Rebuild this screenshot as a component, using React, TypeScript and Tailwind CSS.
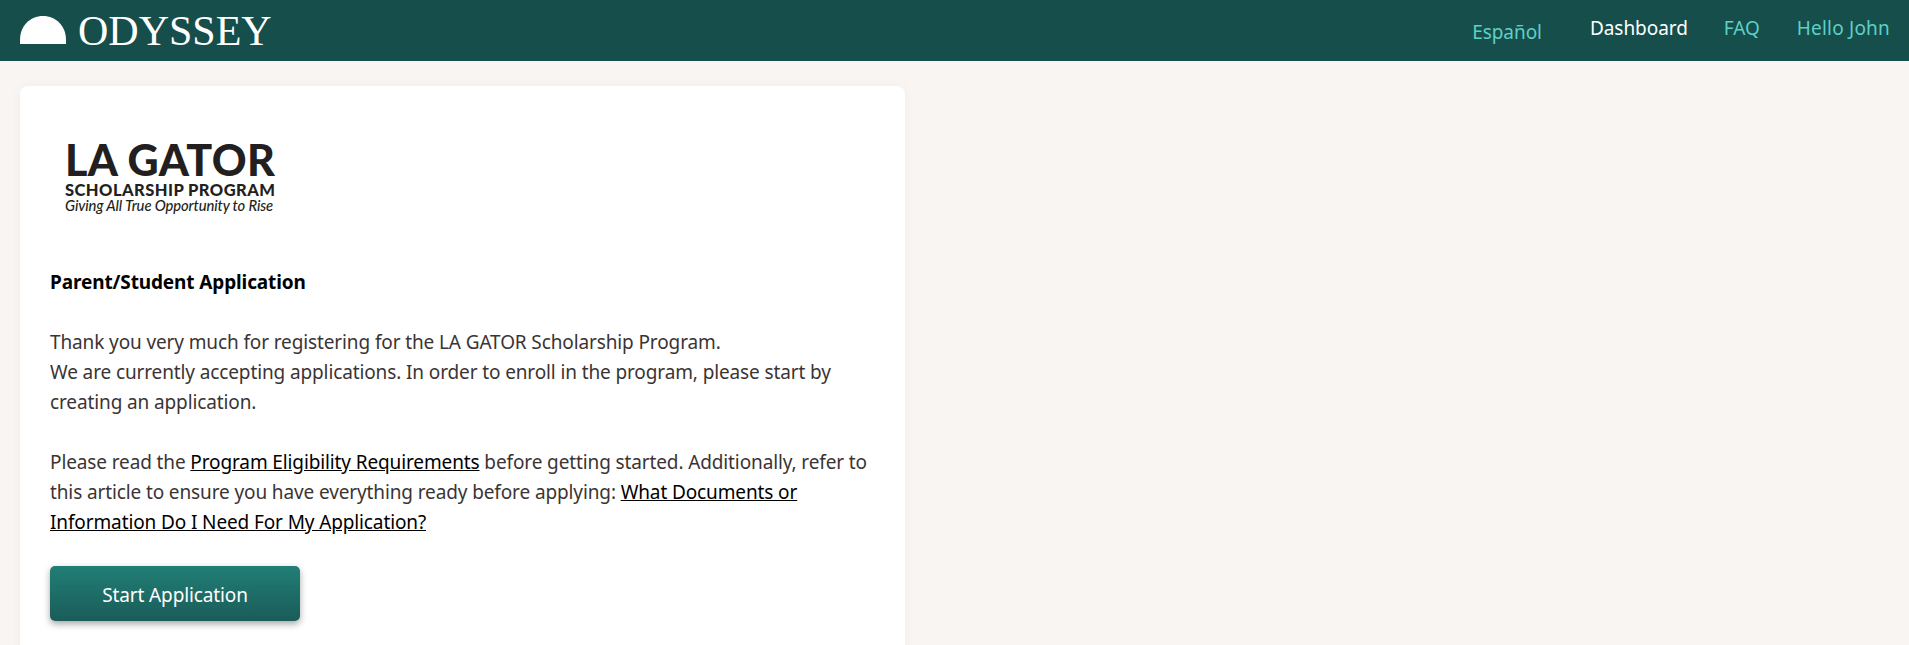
const bodyFont = "font-['Noto_Sans','Open_Sans',sans-serif]";

function Header() {
  return (
    <header className="h-[61px] bg-[#164e4c] flex items-center justify-between pl-5 pr-[19px]">
      <div className="flex items-center gap-3">
        <svg width="46" height="28" viewBox="0 0 46 28" className="-mt-[2px]">
          <path d="M0 28 V24 C0 10 10 0 23 0 C36 0 46 10 46 24 V28 Z" fill="#ffffff" />
        </svg>
        <span className="font-['Liberation_Serif',serif] text-[42px] leading-none text-white">ODYSSEY</span>
      </div>
      <nav className="flex items-center text-[19px] leading-6 tracking-[-0.05px]">
        <a className="text-[#5fd0c6] mt-[2px] mr-12">Español</a>
        <a className="text-white -mt-[5px] mr-9">Dashboard</a>
        <a className="text-[#5fd0c6] -mt-[5px] mr-[37px]">FAQ</a>
        <a className="text-[#5fd0c6] -mt-[5px] tracking-[0.2px]">Hello John</a>
      </nav>
    </header>
  );
}

function GatorLogo() {
  return (
    <div className="w-[211px] text-[#231f20] font-['Lato',sans-serif] pl-[15px] box-content">
      <div className="text-[43px] leading-[38px] font-black tracking-[0.4px] whitespace-nowrap">LA GATOR</div>
      <div className="text-[16.5px] leading-[16px] font-black tracking-[0.45px] whitespace-nowrap mt-[3px]">SCHOLARSHIP PROGRAM</div>
      <div className="text-[14.8px] leading-[15px] font-medium italic whitespace-nowrap">Giving All True Opportunity to Rise</div>
    </div>
  );
}

function ApplicationCard() {
  return (
    <section className="w-[885px] bg-white rounded-lg pt-[55px] px-[30px] pb-10 shadow-[0_0_12px_rgba(0,0,0,0.04)] text-[19px] leading-[30px] tracking-[-0.12px]">
      <GatorLogo />
      <h2 className="mt-[54px] font-bold text-black">Parent/Student Application</h2>
      <p className="mt-[30px] text-[#3b3434]">
        Thank you very much for registering for the LA GATOR Scholarship Program.
        <br />
        We are currently accepting applications. In order to enroll in the program, please start by
        <br />
        creating an application.
      </p>
      <p className="mt-[30px] text-[#3b3434]">
        Please read the <a className="text-black underline">Program Eligibility Requirements</a> before getting started. Additionally, refer to
        <br />
        this article to ensure you have everything ready before applying: <a className="text-black underline">What Documents or</a>
        <br />
        <a className="text-black underline">Information Do I Need For My Application?</a>
      </p>
      <button className="mt-[29px] block w-[250px] h-[55px] pt-[2px] rounded-[5px] bg-gradient-to-b from-[#217f76] to-[#1a5c59] text-white shadow-[0_3px_7px_rgba(0,0,0,0.35)]">
        Start Application
      </button>
    </section>
  );
}

export default function App() {
  return (
    <div className={`h-[645px] overflow-hidden bg-[#f9f5f2] ${bodyFont}`}>
      <Header />
      <main className="pt-[25px] pl-5">
        <ApplicationCard />
      </main>
    </div>
  );
}
